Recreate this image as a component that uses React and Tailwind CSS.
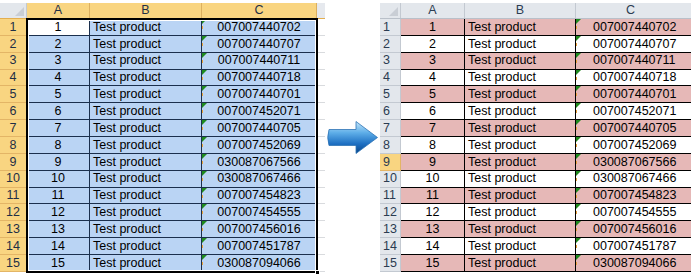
import React from 'react';

const codes = [
  '007007440702', '007007440707', '007007440711', '007007440718', '007007440701',
  '007007452071', '007007440705', '007007452069', '030087067566', '030087067466',
  '007007454823', '007007454555', '007007456016', '007007451787', '030087094066',
];

const TextFlag = () => (
  <>
    <span className="absolute left-0 top-0 w-0 h-0 border-t-[5px] border-t-[#1f8a1f] border-r-[5px] border-r-transparent"></span>
    <span className="absolute left-0 top-[7px] w-[1px] h-[3px] bg-[#e9a23b]"></span>
  </>
);

const Corner = ({ w }) => (
  <div className={`${w} h-full bg-[#e3e7ec] border-r border-[#c3c9d1] relative`}>
    <span className="absolute right-[2px] bottom-[2px] w-0 h-0 border-l-[9px] border-l-transparent border-b-[9px] border-b-[#c9ced5]"></span>
  </div>
);

const LeftSheet = () => (
  <div className="w-[325px] shrink-0">
    {/* column headers */}
    <div className="flex h-[16px] border-b border-[#e3ae4f]">
      <Corner w="w-[27px]" />
      <div className="w-[63px] bg-[#f9d581] border-r border-[#dcb060] flex items-center justify-center text-[#1f2f45]">A</div>
      <div className="w-[112px] bg-[#f9d581] border-r border-[#dcb060] flex items-center justify-center text-[#1f2f45]">B</div>
      <div className="w-[115px] bg-[#f9d581] border-r border-[#dcb060] flex items-center justify-center text-[#1f2f45]">C</div>
      <div className="flex-1 bg-[#e6e9ee]"></div>
    </div>
    <div className="relative">
      {codes.map((code, i) => (
        <div key={i} className="flex h-[16.87px]">
          <div className="w-[27px] bg-[#f9d581] border-r border-b border-[#e3b566] flex items-center justify-center text-[#1f2f45]">{i + 1}</div>
          <div className={`w-[63px] ${i === 0 ? 'bg-white' : 'bg-[#bad4f4]'} border-r border-b border-[#1b2f4d] flex items-center justify-center`}>{i + 1}</div>
          <div className="w-[112px] bg-[#bad4f4] border-r border-b border-[#1b2f4d] flex items-center pl-[3px]">Test product</div>
          <div className="relative w-[115px] bg-[#bad4f4] border-r border-b border-[#1b2f4d] flex items-center justify-center">
            <TextFlag />
            {code}
          </div>
          <div className="flex-1 border-b border-[#d9dbde]"></div>
        </div>
      ))}
      {/* selection outline */}
      <div className="absolute left-[26px] top-[-1px] w-[292px] bottom-[-1px] border-2 border-black pointer-events-none">
        <div className="w-full h-full border border-white"></div>
      </div>
      <span className="absolute left-[315px] bottom-[-3px] w-[5px] h-[5px] bg-black border border-white"></span>
    </div>
  </div>
);

const Arrow = () => (
  <svg width="53" height="35" viewBox="0 0 53 35">
    <defs>
      <linearGradient id="arrowFill" x1="0" y1="0" x2="0" y2="1">
        <stop offset="0" stopColor="#c4e6fa" />
        <stop offset="0.35" stopColor="#5eaee8" />
        <stop offset="0.7" stopColor="#1d6fc2" />
        <stop offset="1" stopColor="#0b4688" />
      </linearGradient>
    </defs>
    <path
      d="M3 9.5 L30 9.5 L30 1.5 L51.5 17.5 L30 33.5 L30 25.5 L3 25.5 Q0.5 17.5 3 9.5 Z"
      fill="url(#arrowFill)"
      stroke="#2f73b5"
      strokeWidth="0.8"
    />
  </svg>
);

const RightSheet = () => (
  <div className="flex-1 overflow-hidden">
    <div className="flex h-[16px] border-b border-[#b9c0c9] w-[320px]">
      <Corner w="w-[21px]" />
      <div className="w-[64px] bg-[#e3e7ec] border-r border-[#c3c9d1] flex items-center justify-center text-[#2b3c52]">A</div>
      <div className="w-[111px] bg-[#e3e7ec] border-r border-[#c3c9d1] flex items-center justify-center text-[#2b3c52]">B</div>
      <div className="w-[124px] shrink-0 bg-[#e3e7ec] flex items-center pl-[50px] text-[#2b3c52]">C</div>
    </div>
    {codes.map((code, i) => {
      const pink = i % 2 === 0;
      const fill = pink ? 'bg-[#e6b8b7]' : 'bg-white';
      return (
        <div key={i} className="flex h-[16.87px] w-[320px]">
          <div className={`w-[21px] ${i === 8 ? 'bg-[#f9d581] border-[#e3b566]' : 'bg-[#e3e7ec] border-[#c3c9d1]'} border-r border-b flex items-center pl-[3px] text-[#2b3c52]`}>{i + 1}</div>
          <div className={`w-[64px] ${fill} border-r border-b border-black flex items-center justify-center`}>{i + 1}</div>
          <div className={`w-[111px] ${fill} border-r border-b border-black flex items-center pl-[3px]`}>Test product</div>
          <div className={`relative w-[124px] shrink-0 ${fill} border-b border-black flex items-center pl-[17px]`}>
            <TextFlag />
            {code}
          </div>
        </div>
      );
    })}
  </div>
);

export default function App() {
  return (
    <div className="w-[691px] h-[277px] bg-white flex pt-[3px] overflow-hidden font-['Liberation_Sans',Arial,sans-serif] text-[12.5px] leading-none text-black">
      <LeftSheet />
      <div className="w-[55px] shrink-0 pt-[117px] pl-[1px]">
        <Arrow />
      </div>
      <RightSheet />
    </div>
  );
}
